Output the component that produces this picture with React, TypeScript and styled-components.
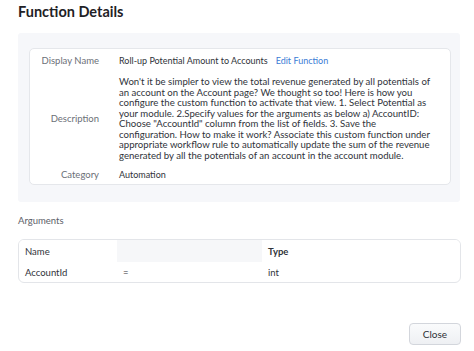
import React from "react";
import styled, { createGlobalStyle } from "styled-components";

const GlobalStyle = createGlobalStyle`
  html, body {
    margin: 0;
    padding: 0;
    background: #ffffff;
  }
  body {
    font-family: Lato, "Noto Sans", sans-serif;
    color: #2e3136;
    -webkit-font-smoothing: antialiased;
  }
`;

const description =
  'Won\'t it be simpler to view the total revenue generated by all potentials of an account on the Account page? We thought so too! Here is how you configure the custom function to activate that view. 1. Select Potential as your module. 2.Specify values for the arguments as below a) AccountID: Choose "AccountId" column from the list of fields. 3. Save the configuration. How to make it work? Associate this custom function under appropriate workflow rule to automatically update the sum of the revenue generated by all the potentials of an account in the account module.';

const App = () => {
  return (
    <Page>
      <GlobalStyle />
      <Title>Function Details</Title>
      <Panel>
        <Card>
          <Row>
            <Label>Display Name</Label>
            <Value>
              Roll-up Potential Amount to Accounts
              <EditLink>Edit Function</EditLink>
            </Value>
          </Row>
          <Row $space={10}>
            <Label>Description</Label>
            <Description>{description}</Description>
          </Row>
          <Row $space={8}>
            <Label>Category</Label>
            <Value>Automation</Value>
          </Row>
        </Card>
      </Panel>
      <SectionTitle>Arguments</SectionTitle>
      <ArgsTable>
        <HeadCell>Name</HeadCell>
        <HeadCell shaded />
        <HeadCell bold>Type</HeadCell>
        <BodyCell>AccountId</BodyCell>
        <BodyCell>=</BodyCell>
        <BodyCell>int</BodyCell>
      </ArgsTable>
      <Footer>
        <CloseButton>Close</CloseButton>
      </Footer>
    </Page>
  );
};

const Page = styled.div`
  width: 474px;
  height: 351px;
  box-sizing: border-box;
  padding: 0 13px 0 18px;
  display: flex;
  flex-direction: column;
`;

const Title = styled.h1`
  margin: 0;
  font-size: 14.5px;
  line-height: 24px;
  font-weight: 700;
  color: #1f2226;
`;

const Panel = styled.section`
  margin-top: 9px;
  width: 442px;
  box-sizing: border-box;
  padding: 15px 9px 17px 11px;
  background: #f6f7fa;
  border-radius: 3px;
`;

const Card = styled.div`
  background: #ffffff;
  border: 1px solid #e5e7eb;
  border-radius: 5px;
  padding: 6px 0 3px;
  display: flex;
  flex-direction: column;
`;

const Row = styled.div<{ $space?: number }>`
  display: grid;
  grid-template-columns: 69px 1fr;
  column-gap: 20px;
  align-items: center;
  padding-top: ${(p) => p.$space ?? 0}px;
`;

const Label = styled.div`
  text-align: right;
  font-size: 9.5px;
  line-height: 12px;
  color: #6b6f77;
`;

const Value = styled.div`
  font-size: 9px;
  line-height: 12px;
  color: #30333a;
`;

const EditLink = styled.span`
  margin-left: 8px;
  color: #3a7bd5;
`;

const Description = styled.div`
  width: 315px;
  font-size: 9.6px;
  line-height: 10.5px;
  color: #30333a;
`;

const SectionTitle = styled.div`
  margin-top: 13px;
  font-size: 9.5px;
  line-height: 12px;
  color: #5d6169;
`;

const ArgsTable = styled.div`
  margin-top: 12px;
  width: 443px;
  box-sizing: border-box;
  border: 1px solid #e3e5e9;
  border-radius: 6px;
  overflow: hidden;
  display: grid;
  grid-template-columns: 98px 145px 1fr;
  grid-template-rows: 22px 20px;
`;

const HeadCell = styled.div<{ shaded?: boolean; bold?: boolean }>`
  display: flex;
  align-items: center;
  padding: 0 6px;
  font-size: 9.5px;
  font-weight: ${(p) => (p.bold ? 700 : 400)};
  color: #30333a;
  background: ${(p) => (p.shaded ? "#f6f7f9" : "#ffffff")};
`;

const BodyCell = styled.div`
  display: flex;
  align-items: center;
  padding: 0 6px;
  font-size: 9.5px;
  color: #30333a;
`;

const Footer = styled.div`
  margin-top: 40px;
  display: flex;
  justify-content: flex-end;
`;

const CloseButton = styled.button`
  width: 52px;
  height: 22px;
  padding: 0;
  border: 1px solid #d3d6dc;
  border-radius: 4px;
  background: linear-gradient(#fafbfc, #eef0f3);
  font-family: Lato, "Noto Sans", sans-serif;
  font-size: 10px;
  color: #2e3136;
`;

export default App;
